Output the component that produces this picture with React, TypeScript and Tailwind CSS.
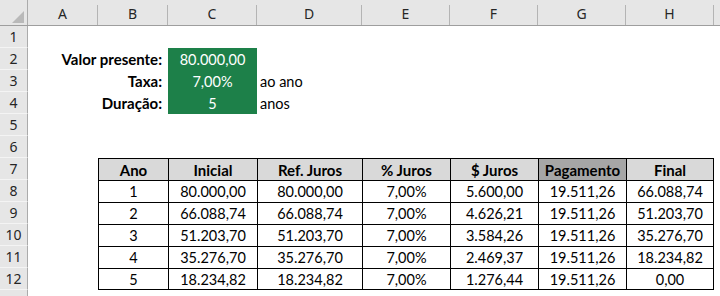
import React from 'react';

type Col = { letter: string; width: string };

const columns: Col[] = [
  { letter: 'A', width: 'w-[70px]' },
  { letter: 'B', width: 'w-[70px]' },
  { letter: 'C', width: 'w-[89px]' },
  { letter: 'D', width: 'w-[105px]' },
  { letter: 'E', width: 'w-[88px]' },
  { letter: 'F', width: 'w-[88px]' },
  { letter: 'G', width: 'w-[88px]' },
  { letter: 'H', width: 'w-[88px]' },
];

const tableWidths = ['w-[70px]', 'w-[89px]', 'w-[105px]', 'w-[88px]', 'w-[88px]', 'w-[88px]', 'w-[88px]'];

const tableHeader = ['Ano', 'Inicial', 'Ref. Juros', '% Juros', '$ Juros', 'Pagamento', 'Final'];

const tableRows = [
  ['1', '80.000,00', '80.000,00', '7,00%', '5.600,00', '19.511,26', '66.088,74'],
  ['2', '66.088,74', '66.088,74', '7,00%', '4.626,21', '19.511,26', '51.203,70'],
  ['3', '51.203,70', '51.203,70', '7,00%', '3.584,26', '19.511,26', '35.276,70'],
  ['4', '35.276,70', '35.276,70', '7,00%', '2.469,37', '19.511,26', '18.234,82'],
  ['5', '18.234,82', '18.234,82', '7,00%', '1.276,44', '19.511,26', '0,00'],
];

const inputs = [
  { label: 'Valor presente:', value: '80.000,00', unit: '' },
  { label: 'Taxa:', value: '7,00%', unit: 'ao ano' },
  { label: 'Duração:', value: '5', unit: 'anos' },
];

const RowNumber: React.FC<{ n?: number; last?: boolean }> = ({ n, last }) => (
  <div
    className={`w-[28px] shrink-0 bg-[#e6e6e6] border-r border-[#ababab] flex items-center justify-center text-[14px] text-[#262626] ${
      last ? '' : 'border-b border-b-[#f4f4f4]'
    }`}
    style={{ fontFamily: '"Noto Sans", sans-serif' }}
  >
    {n}
  </div>
);

const SheetRow: React.FC<{ n?: number; last?: boolean; children?: React.ReactNode }> = ({ n, last, children }) => (
  <div className={`flex ${last ? 'flex-1' : 'h-[22px]'}`}>
    <RowNumber n={n} last={last} />
    <div className="flex flex-1 items-stretch">{children}</div>
  </div>
);

export default function App() {
  return (
    <div
      className="w-[720px] h-[296px] overflow-hidden bg-white flex flex-col text-black"
      style={{ fontFamily: 'Lato, "Liberation Sans", sans-serif' }}
    >
      {/* column headers */}
      <div
        className="flex h-[26px] shrink-0 bg-[#e6e6e6] border-b border-[#9e9e9e] text-[14px] text-[#262626]"
        style={{ fontFamily: '"Noto Sans", sans-serif' }}
      >
        <div className="w-[28px] shrink-0 border-r border-[#ababab] flex items-end justify-end pr-[3px] pb-[2px]">
          <svg width="12" height="12" viewBox="0 0 12 12">
            <polygon points="12,0 12,12 0,12" fill="#b9b9b9" />
          </svg>
        </div>
        {columns.map((c) => (
          <div key={c.letter} className={`${c.width} shrink-0 flex`}>
            <div className="flex-1 flex items-center justify-center pt-[1px]">{c.letter}</div>
            <div className="w-px h-[20px] self-end bg-[#b4b4b4]" />
          </div>
        ))}
        <div className="flex-1" />
      </div>

      <SheetRow n={1} />
      {inputs.map((r, i) => (
        <SheetRow key={r.label} n={i + 2}>
          <div className="w-[140px] shrink-0 flex items-center justify-end pr-[6px] pt-[1px] font-bold text-[15px]">
            {r.label}
          </div>
          <div className="w-[89px] shrink-0 flex items-center justify-center pt-[1px] bg-[#1d8049] text-white text-[14.5px]">
            {r.value}
          </div>
          <div className="w-[105px] shrink-0 flex items-center pl-[3px] pt-[1px] text-[14.5px]">{r.unit}</div>
        </SheetRow>
      ))}
      <SheetRow n={5} />
      <SheetRow n={6} />

      <SheetRow n={7}>
        <div className="w-[70px] shrink-0" />
        {tableHeader.map((h, i) => (
          <div
            key={h}
            className={`${tableWidths[i]} shrink-0 flex items-center justify-center pt-[1px] border-l border-t border-black font-bold text-[15px] ${
              h === 'Pagamento' ? 'bg-[#a6a6a6]' : 'bg-[#d9d9d9]'
            } ${i === tableHeader.length - 1 ? 'border-r' : ''}`}
          >
            {h}
          </div>
        ))}
      </SheetRow>

      {tableRows.map((row, r) => (
        <SheetRow key={r} n={r + 8}>
          <div className="w-[70px] shrink-0" />
          {row.map((v, i) => (
            <div
              key={i}
              className={`${tableWidths[i]} shrink-0 flex items-center justify-center pt-[1px] border-l border-t border-black text-[14.5px] ${
                i === row.length - 1 ? 'border-r' : ''
              } ${r === tableRows.length - 1 ? 'border-b' : ''}`}
            >
              {v}
            </div>
          ))}
        </SheetRow>
      ))}

      <SheetRow last />
    </div>
  );
}
